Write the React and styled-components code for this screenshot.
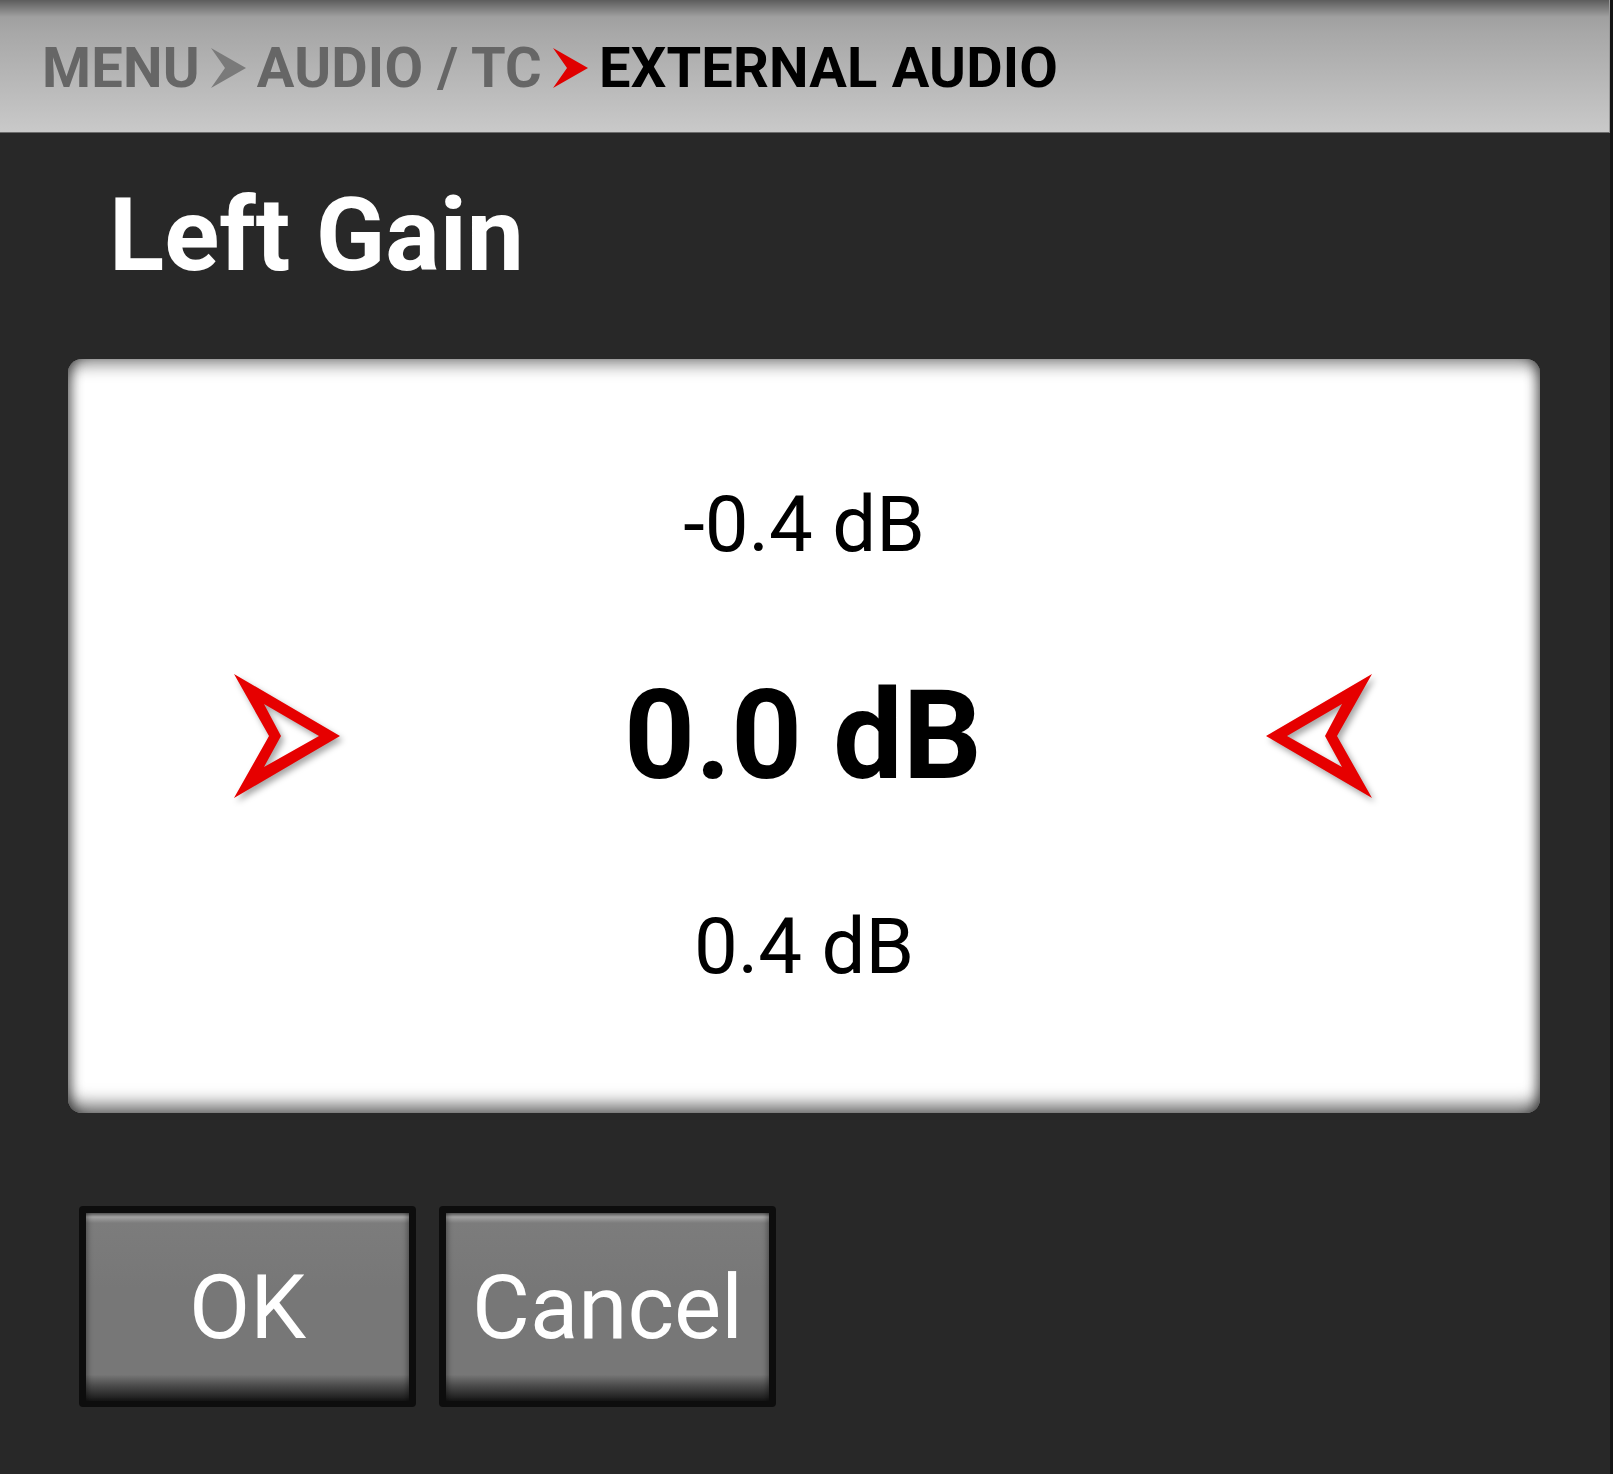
import styled, { createGlobalStyle } from "styled-components";

const GlobalStyle = createGlobalStyle`
  html, body {
    margin: 0;
    padding: 0;
    background: #282828;
  }
  * { box-sizing: border-box; }
`

const Page = styled.div`
  width: 1613px;
  height: 1474px;
  background-color: #282828;
  border-right: 3px solid #141414;
  font-family: Roboto, "Noto Sans", sans-serif;
  display: flex;
  flex-direction: column;
  overflow: hidden;
`

const Header = styled.div`
  height: 133px;
  flex-shrink: 0;
  display: flex;
  align-items: center;
  gap: 11px;
  padding: 3px 0 0 42px;
  background: linear-gradient(to bottom, #5c5c5c 0px, #787878 7px, #a0a0a0 17px, #a8a8a8 34px, #c9c9c9 100%);
  border-bottom: 1px solid #6c6c6c;
  border-right: 1px solid #9a9a9a;
`

const Crumb = styled.span`
  font-size: 56px;
  font-weight: 700;
  line-height: 1;
  letter-spacing: 0.2px;
  white-space: nowrap;
  color: ${p => (p.current ? "#000" : "#666")};
`

const Chevron = styled.svg`
  width: 35px;
  height: 40px;
  flex-shrink: 0;
`

const Title = styled.h1`
  margin: 51px 0 0 109px;
  font-size: 102px;
  font-weight: 700;
  line-height: 1;
  color: #fff;
`

const Card = styled.div`
  margin: 73px 70px 0 68px;
  height: 754px;
  background: #fff;
  border-radius: 14px;
  box-shadow:
    inset 0 12px 16px -6px rgba(0, 0, 0, 0.45),
    inset 0 -14px 18px -6px rgba(0, 0, 0, 0.6),
    inset 12px 0 12px -8px rgba(0, 0, 0, 0.4),
    inset -12px 0 12px -8px rgba(0, 0, 0, 0.4);
  display: flex;
  flex-direction: column;
  align-items: center;
  justify-content: center;
  gap: 109px;
`

const Value = styled.div`
  font-size: ${p => (p.selected ? "124px" : "78px")};
  font-weight: ${p => (p.selected ? 700 : 400)};
  line-height: 1;
  color: #000;
  white-space: nowrap;
`

const SelectRow = styled.div`
  width: 100%;
  display: flex;
  align-items: center;
  justify-content: space-between;
  padding: 0 167px 0 165px;
`

const Arrow = styled.svg`
  width: 108px;
  height: 126px;
  flex-shrink: 0;
  transform: ${p => (p.flip ? "scaleX(-1)" : "none")};
  filter: drop-shadow(${p => (p.flip ? "-3px" : "3px")} 4px 3px rgba(0, 0, 0, 0.35));
`

const ButtonRow = styled.div`
  display: flex;
  gap: 23px;
  margin: 93px 0 0 79px;
`

const Button = styled.button`
  width: 337px;
  height: 201px;
  border: 7px solid #0d0d0d;
  border-bottom-width: 6px;
  border-radius: 4px;
  padding: 0;
  background: linear-gradient(to bottom, #5a5a5a 0px, #a2a2a2 4px, #7c7c7c 10px, #777 40%, #777 86%, #4a4a4a 92%, #161616 100%);
  box-shadow: inset 5px 0 5px -3px rgba(0, 0, 0, 0.35), inset -5px 0 5px -3px rgba(0, 0, 0, 0.35);
  font-family: Roboto, "Noto Sans", sans-serif;
  font-size: 89px;
  font-weight: 400;
  line-height: 1;
  color: #fff;
  display: flex;
  align-items: center;
  justify-content: center;
  cursor: pointer;
`

const ChevronIcon = ({ color }) => (
  <Chevron viewBox="0 0 35 40">
    <path d="M0 0 L35 20 L0 40 L14 20 Z" fill={color} />
  </Chevron>
)

const PickArrow = ({ flip }) => (
  <Arrow flip={flip ? 1 : 0} viewBox="0 0 108 126">
    <path
      fillRule="evenodd"
      fill="#e60000"
      d="M1 1 L107 63 L1 125 L36 63 Z M31 31 L86 63 L31 94 L48 63 Z"
    />
  </Arrow>
)

const App = () => {
  return (
    <>
      <GlobalStyle />
      <Page>
        <Header>
          <Crumb>MENU</Crumb>
          <ChevronIcon color="#7a7a7a" />
          <Crumb>AUDIO / TC</Crumb>
          <ChevronIcon color="#e00000" />
          <Crumb current>EXTERNAL AUDIO</Crumb>
        </Header>
        <Title>Left Gain</Title>
        <Card>
          <Value>-0.4 dB</Value>
          <SelectRow>
            <PickArrow />
            <Value selected>0.0 dB</Value>
            <PickArrow flip />
          </SelectRow>
          <Value>0.4 dB</Value>
        </Card>
        <ButtonRow>
          <Button>OK</Button>
          <Button>Cancel</Button>
        </ButtonRow>
      </Page>
    </>
  )
}

export default App;
